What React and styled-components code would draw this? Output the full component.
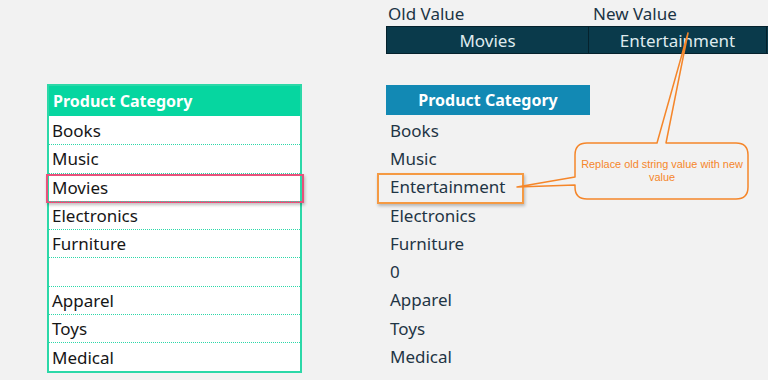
import React from "react";
import styled, { createGlobalStyle, css } from "styled-components";

const GlobalStyle = createGlobalStyle`
  html, body {
    margin: 0;
    padding: 0;
    background: #f2f2f2;
  }
  body {
    font-family: "Noto Sans", "Open Sans", sans-serif;
  }
`;

const Page = styled.div`
  position: relative;
  width: 768px;
  height: 380px;
  overflow: hidden;
  display: flex;
  padding-left: 47px;
  box-sizing: border-box;
`;

const LeftColumn = styled.div`
  width: 255px;
  padding-top: 84px;
  flex-shrink: 0;
`;

const RightColumn = styled.div`
  margin-left: 84px;
  flex: 1;
  display: flex;
  flex-direction: column;
`;

const LabelRow = styled.div`
  display: flex;
  height: 26px;
  align-items: center;
  color: #1b3445;
  font-size: 17px;
`;

const Label = styled.div`
  width: ${(p) => p.$w}px;
  padding-left: 2px;
`;

const ValueRow = styled.div`
  display: flex;
  height: 28px;
  background: #0a3a4b;
  border: 1px solid #05222d;
  border-right: none;
  box-sizing: border-box;
`;

const ValueCell = styled.div`
  width: ${(p) => p.$w}px;
  flex-shrink: 0;
  display: flex;
  align-items: center;
  justify-content: center;
  color: #dfeaee;
  font-size: 17px;
  border-right: 1px solid #05222d;
`;

const Table = styled.div`
  border: 2px solid #2cd8a8;
  background: #ffffff;
`;

const Header = styled.div`
  height: ${(p) => p.$h || 30}px;
  width: ${(p) => (p.$w ? `${p.$w}px` : "auto")};
  box-sizing: border-box;
  display: flex;
  align-items: center;
  background: ${(p) => p.$bg};
  color: #ffffff;
  font-weight: 700;
  font-size: 16px;
  padding-left: ${(p) => (p.$center ? 0 : 4)}px;
  justify-content: ${(p) => (p.$center ? "center" : "flex-start")};
`;

const RightTable = styled.div`
  margin-top: 31px;
`;

const Rows = styled.div`
  padding-top: ${(p) => p.$offset || 0}px;
`;

const Row = styled.div`
  position: relative;
  height: 28.3px;
  box-sizing: border-box;
  display: flex;
  align-items: center;
  font-size: 17px;
  color: ${(p) => (p.$plain ? "#1f3545" : "#161616")};
  padding-left: ${(p) => (p.$plain ? 4 : 3)}px;
  border-top: ${(p) => (p.$line ? "1px dotted #2cd8a8" : "none")};
  ${(p) =>
    p.$mark === "pink" &&
    css`
      &::after {
        content: "";
        position: absolute;
        left: -3px;
        right: -4px;
        top: 0;
        bottom: -2px;
        border: 2px solid #e8517b;
        box-shadow: 1px 2px 3px rgba(0, 0, 0, 0.25);
      }
    `}
  ${(p) =>
    p.$mark === "orange" &&
    css`
      &::after {
        content: "";
        position: absolute;
        left: -9px;
        width: 143px;
        top: 0;
        bottom: -3px;
        border: 2px solid #f59a43;
        box-shadow: 1px 2px 3px rgba(0, 0, 0, 0.25);
      }
    `}
`;

const Overlay = styled.svg`
  position: absolute;
  left: 0;
  top: 0;
  pointer-events: none;
`;

const CalloutText = styled.div`
  position: absolute;
  left: 576px;
  top: 143px;
  width: 172px;
  height: 56px;
  display: flex;
  align-items: center;
  justify-content: center;
  text-align: center;
  font-family: "Liberation Sans", Arial, sans-serif;
  font-size: 10.9px;
  line-height: 13px;
  color: #f5862a;
`;

const source = ["Books", "Music", "Movies", "Electronics", "Furniture", "", "Apparel", "Toys", "Medical"];
const result = ["Books", "Music", "Entertainment", "Electronics", "Furniture", "0", "Apparel", "Toys", "Medical"];

const bubble =
  "M 587 143 L 657 143 L 688 33 L 666 143 L 736 143 Q 748 143 748 155 L 748 187 Q 748 199 736 199 " +
  "L 587 199 Q 575 199 575 187 L 575 185 L 517 187 L 575 177 L 575 155 Q 575 143 587 143 Z";

export default function App() {
  return (
    <>
      <GlobalStyle />
      <Page>
        <LeftColumn>
          <Table>
            <Header $bg="#06d6a0">Product Category</Header>
            {source.map((item, i) => (
              <Row key={i} $line={i > 0} $mark={item === "Movies" ? "pink" : undefined}>
                {item}
              </Row>
            ))}
          </Table>
        </LeftColumn>
        <RightColumn>
          <LabelRow>
            <Label $w={203}>Old Value</Label>
            <Label $w={176}>New Value</Label>
          </LabelRow>
          <ValueRow>
            <ValueCell $w={201}>Movies</ValueCell>
            <ValueCell $w={177}>Entertainment</ValueCell>
            <ValueCell $w={20} />
          </ValueRow>
          <RightTable>
            <Header $bg="#1289b4" $center $w={204}>
              Product Category
            </Header>
            <Rows $offset={1}>
              {result.map((item, i) => (
                <Row key={i} $plain $mark={item === "Entertainment" ? "orange" : undefined}>
                  {item}
                </Row>
              ))}
            </Rows>
          </RightTable>
        </RightColumn>
        <Overlay width="768" height="380" viewBox="0 0 768 380">
          <path d={bubble} fill="#f2f2f2" stroke="#f5862a" strokeWidth="1.5" strokeLinejoin="round" />
        </Overlay>
        <CalloutText>Replace old string value with new value</CalloutText>
      </Page>
    </>
  );
}
